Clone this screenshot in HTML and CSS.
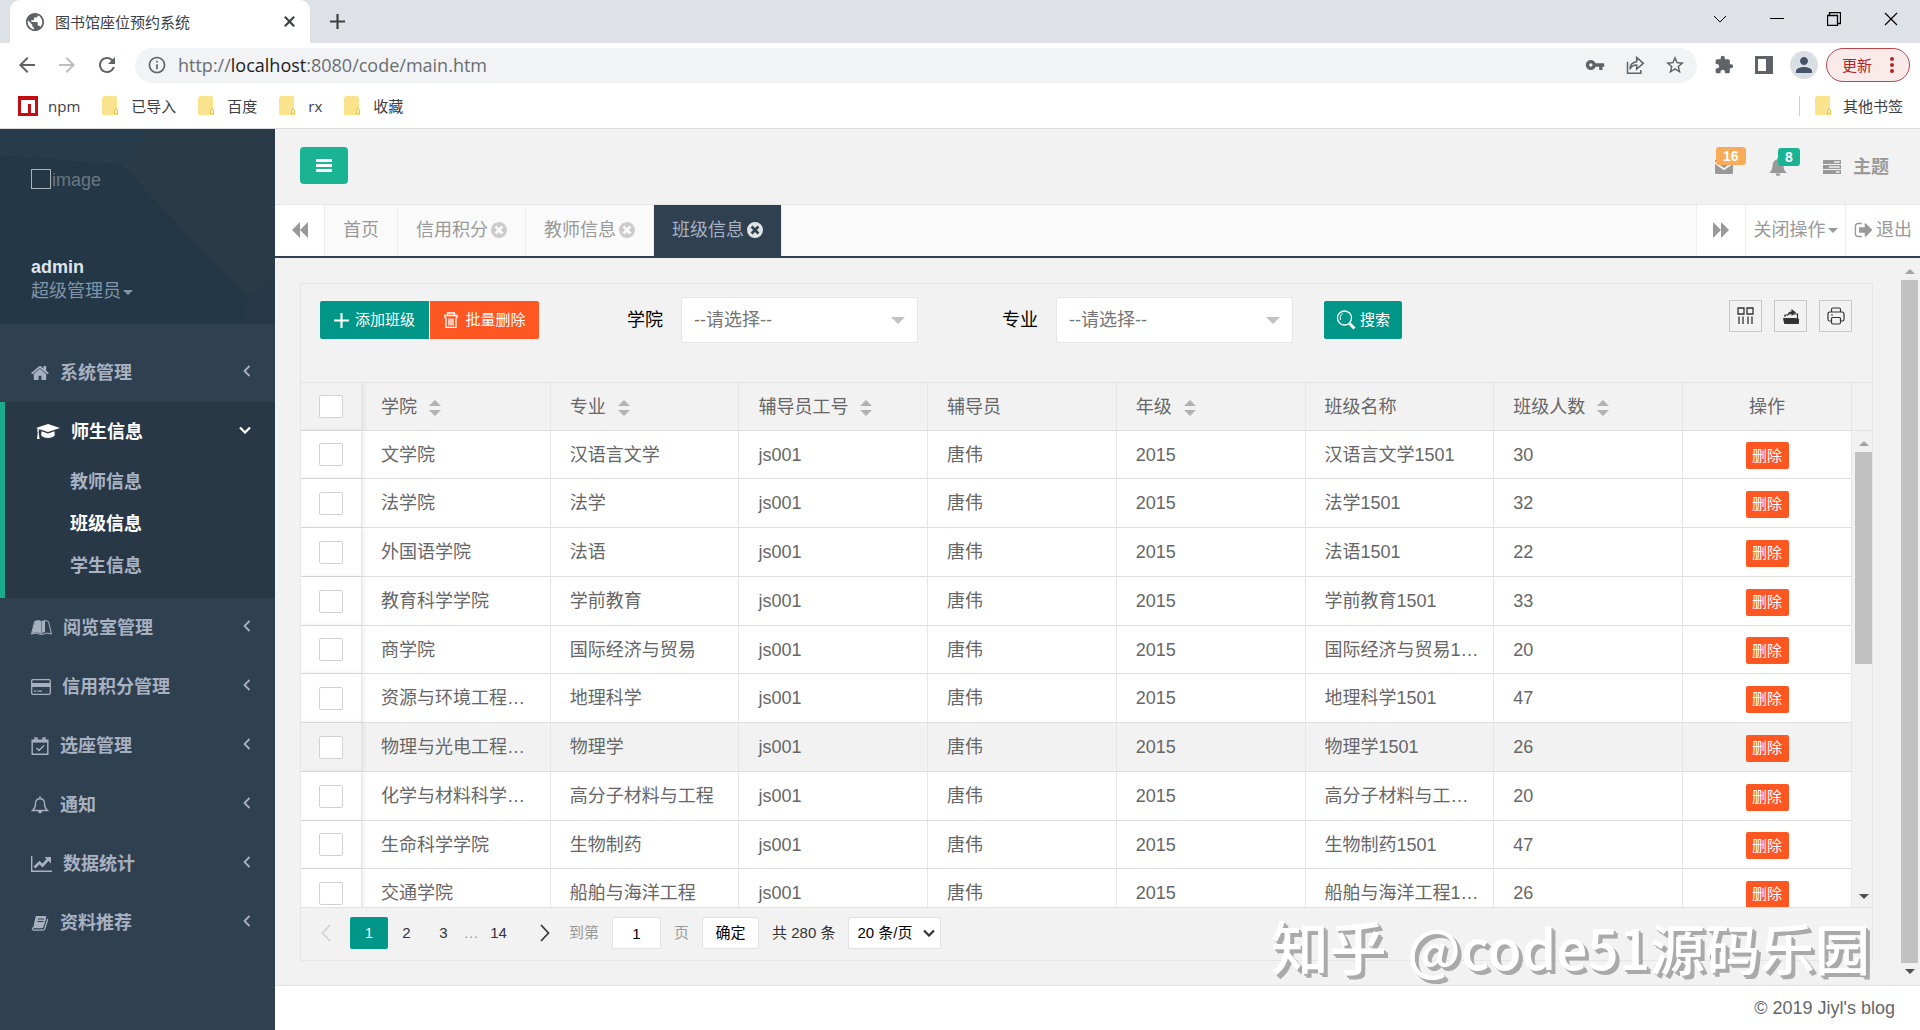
FILE: index.html
```html
<!DOCTYPE html>
<html lang="zh-CN">
<head>
<meta charset="utf-8">
<title>图书馆座位预约系统</title>
<link rel="stylesheet" href="styles.css">
</head>
<body>
<svg class="sprite" aria-hidden="true">
  <symbol id="globe" viewBox="1 1 22 22"><path d="M12 2C6.480 2 2 6.480 2 12s4.480 10 10 10 10-4.480 10-10S17.520 2 12 2zm-1 17.930c-3.950-.49-7-3.850-7-7.930 0-.62.08-1.210.21-1.790L9 15v1c0 1.100.9 2 2 2v1.930zm6.900-2.540c-.26-.81-1-1.390-1.900-1.390h-1v-3c0-.55-.45-1-1-1H8v-2h2c.55 0 1-.45 1-1V7h2c1.100 0 2-.9 2-2v-.41c2.930 1.190 5 4.060 5 7.410 0 2.080-.8 3.970-2.100 5.390z"/></symbol>
  <symbol id="back" viewBox="0 0 24 24"><path d="M20 11H7.830l5.590-5.590L12 4l-8 8 8 8 1.410-1.410L7.830 13H20v-2z"/></symbol>
  <symbol id="reload" viewBox="0 0 24 24"><path d="M17.650 6.350A7.958 7.958 0 0 0 12 4c-4.420 0-7.990 3.580-7.990 8s3.570 8 7.990 8c3.730 0 6.840-2.550 7.730-6h-2.080A5.990 5.990 0 0 1 12 18c-3.310 0-6-2.690-6-6s2.690-6 6-6c1.660 0 3.140.69 4.220 1.780L13 11h7V4l-2.350 2.350z"/></symbol>
  <symbol id="info" viewBox="0 0 24 24"><path d="M11 7h2v2h-2zm0 4h2v6h-2zm1-9C6.480 2 2 6.480 2 12s4.480 10 10 10 10-4.480 10-10S17.520 2 12 2zm0 18c-4.410 0-8-3.590-8-8s3.590-8 8-8 8 3.590 8 8-3.590 8-8 8z"/></symbol>
  <symbol id="key" viewBox="0 0 24 24"><path d="M12.650 10C11.830 7.670 9.610 6 7 6c-3.310 0-6 2.690-6 6s2.690 6 6 6c2.610 0 4.830-1.670 5.650-4H17v4h4v-4h2v-4H12.650zM7 14c-1.100 0-2-.9-2-2s.9-2 2-2 2 .9 2 2-.9 2-2 2z"/></symbol>
  <symbol id="share" viewBox="0 0 24 24"><path d="M3 8v14h16v-4M14 8V3l8 7-8 7v-5q-6 0-8 5 0-8 8-9z" fill="none" stroke="currentColor" stroke-width="1.8"/></symbol>
  <symbol id="star" viewBox="1 1 22 22"><path d="M22 9.240l-7.190-.62L12 2 9.190 8.630 2 9.240l5.460 4.730L5.820 21 12 17.270 18.180 21l-1.630-7.030L22 9.240zM12 15.400l-3.760 2.270 1-4.280-3.320-2.880 4.380-.38L12 6.100l1.710 4.040 4.380.38-3.320 2.880 1 4.280L12 15.400z"/></symbol>
  <symbol id="puzzle" viewBox="0 0 24 24"><path d="M20.500 11H19V7c0-1.100-.9-2-2-2h-4V3.500a2.500 2.500 0 0 0-5 0V5H4c-1.100 0-1.990.9-1.990 2v3.800H3.500c1.490 0 2.700 1.210 2.700 2.700s-1.210 2.700-2.700 2.700H2V20c0 1.100.9 2 2 2h3.800v-1.500c0-1.490 1.210-2.700 2.700-2.700 1.490 0 2.700 1.210 2.700 2.700V22H17c1.100 0 2-.9 2-2v-4h1.500a2.500 2.500 0 0 0 0-5z"/></symbol>
  <symbol id="panel" viewBox="0 0 18 18"><path d="M0 0h18v18H0zM3 3v12h8V3z" fill-rule="evenodd"/></symbol>
  <symbol id="person" viewBox="0 0 24 24"><path d="M12 12c2.210 0 4-1.790 4-4s-1.790-4-4-4-4 1.790-4 4 1.790 4 4 4zm0 2c-2.670 0-8 1.340-8 4v2h16v-2c0-2.660-5.330-4-8-4z"/></symbol>
  <symbol id="folder" viewBox="0 0 16 19"><path d="M1 1q0-1 1-1h11q2 0 2 2v11l1 1v4q0 1-1 1H1q-1 0-1-1V2z" fill="#fbe38e"/><path d="M12.500 18v-3.500l1.500-2 1.500 2V18z" fill="#f7edbb" stroke="#e6c34d"/></symbol>
  <symbol id="npm" viewBox="0 0 20 20"><path d="M0 0h20v20H0z" fill="#c40d12"/><path d="M3 4h14v13h-4V8h-3v9H3z" fill="#fff"/></symbol>
  <symbol id="chev" viewBox="0 0 14 14"><path d="M1 4l6 6 6-6" fill="none" stroke="currentColor"/></symbol>
  <symbol id="min" viewBox="0 0 14 14"><path d="M0 6.500h14" fill="none" stroke="currentColor"/></symbol>
  <symbol id="restore" viewBox="0 0 14 14"><path d="M.5 3.500h10v10H.5zM2.500 3V.5h11v11H11" fill="none" stroke="currentColor" stroke-width="1.300"/></symbol>
  <symbol id="close" viewBox="0 0 14 14"><path d="M1 1l12 12M13 1L1 13" fill="none" stroke="currentColor" stroke-width="1.200"/></symbol>
  <symbol id="cross" viewBox="0 0 14 14"><path d="M2 2l10 10M12 2L2 12" fill="none" stroke="currentColor" stroke-width="2.300"/></symbol>
  <symbol id="plus" viewBox="0 0 14 14"><path d="M7 0v14M0 7h14" fill="none" stroke="currentColor" stroke-width="2"/></symbol>
  <symbol id="bars" viewBox="0 0 16 14"><path d="M0 0h16v3H0zM0 5h16v3H0zM0 10h16v3H0z"/></symbol>
  <symbol id="home" viewBox="64 64 1664 1664"><path d="M1472 992v480q0 26-19 45t-45 19h-384v-384h-256v384h-384q-26 0-45-19t-19-45v-480q0-1 .5-3t.5-3l575-474 575 474q1 2 1 6zm223-69l-62 74q-8 9-21 11h-3q-13 0-21-7l-692-577-692 577q-12 8-24 7-13-2-21-11l-62-74q-8-10-7-23.500t11-21.500l719-599q32-26 76-26t76 26l244 204v-195q0-14 9-23t23-9h192q14 0 23 9t9 23v408l219 182q10 8 11 21.500t-7 23.500z"/></symbol>
  <symbol id="cap" viewBox="0 0 24 16"><path d="M12 0l12 4-12 4L3.500 5.200Q2.600 6 2.600 8l1 7H1l.8-7-.6-1q0-1.500.8-2.200L0 4z"/><path d="M5.500 7.300L12 9.500l6.500-2.200.3 4q-2 2.700-6.800 2.700t-6.800-2.700z"/></symbol>
  <symbol id="books" viewBox="0 0 21 15"><path d="M3.500 1.500q4-2 7 0 3-2 7 0l3 12.500q-5-2-8.500.3h-3Q5 12 .5 14z" fill="none" stroke="currentColor"/><path d="M4 1.500q4-1.500 6.500.3V14Q6 11.500 1 13.500zM11 1.800q1.500-1 3-1V12q-2 .3-3 1.500z"/></symbol>
  <symbol id="card" viewBox="0 0 20 16"><path d="M.7 2q0-1.300 1.300-1.300h16q1.300 0 1.300 1.300v12q0 1.300-1.300 1.300H2Q.7 15.300.7 14z" fill="none" stroke="currentColor" stroke-width="1.300"/><path d="M1 4h18v4H1zM3 11.500h2.500v1.300H3zM6.500 11.500H11v1.300H6.500z"/></symbol>
  <symbol id="cal" viewBox="0 0 17 18"><path d="M.7 3.300h15.600v14H.7zM3.500 1h2v3.500h-2zM11.500 1h2v3.500h-2zM5 11l2.500 2.500 5-5" fill="none" stroke="currentColor" stroke-width="1.400"/><path d="M1 3h15v2.500H1z"/></symbol>
  <symbol id="bello" viewBox="0 0 17 18"><path d="M1 14.500q3-2.500 3-7Q4 3 8.500 2.500 13 3 13 7.500q0 4.500 3 7zM8.500 0v2.500" fill="none" stroke="currentColor" stroke-width="1.300"/><path d="M6.500 15h4q-.3 2.500-2 2.500t-2-2.500z"/></symbol>
  <symbol id="chart" viewBox="0 0 21 16"><path d="M.7 0v15.300H21" fill="none" stroke="currentColor" stroke-width="1.400"/><path d="M3.500 11.500l5-5 3 3 5.500-6" fill="none" stroke="currentColor" stroke-width="2.600"/><path d="M13.500 1H20v6.500z"/></symbol>
  <symbol id="book" viewBox="0 0 17 16"><path d="M5 1h8.500q1.700 0 1.200 1.700L12 12q-.4 1.300-2 1.300H1.500L4 2.200Q4.300 1 5 1z"/><path d="M6.500 4h6M6 6.500h6" stroke="#2f4050"/><path d="M1 12.500q-.3 2.700 1.500 2.700h8.700q1.600 0 2.200-1.700L16.200 4" fill="none" stroke="currentColor" stroke-width="1.300"/></symbol>
  <symbol id="left" viewBox="0 0 8 12"><path d="M6.500 1l-5 5 5 5" fill="none" stroke="currentColor" stroke-width="1.800"/></symbol>
  <symbol id="pageleft" viewBox="0 0 10 18"><path d="M9 1L1.500 9 9 17" fill="none" stroke="currentColor" stroke-width="1.700"/></symbol>
  <symbol id="down" viewBox="0 0 12 8"><path d="M1 1.500l5 5 5-5" fill="none" stroke="currentColor" stroke-width="2.200"/></symbol>
  <symbol id="rw" viewBox="0 0 16 16"><path d="M8 0v16L0 8zM16 0v16L8 8z"/></symbol>
  <symbol id="tabx" viewBox="0 0 16 16"><path fill-rule="evenodd" d="M8 0a8 8 0 1 0 0 16A8 8 0 0 0 8 0zM5.500 3.600L8 6.100l2.500-2.500 1.900 1.900L9.900 8l2.500 2.500-1.900 1.900L8 9.900l-2.500 2.500-1.900-1.900L6.100 8 3.600 5.500z"/></symbol>
  <symbol id="signout" viewBox="0 0 1792 1792"><path d="M704 1440q0 4 1 20t.5 26.500-3 23.500-10 19.500-20.500 6.500h-320q-119 0-203.500-84.500t-84.500-203.500v-704q0-119 84.500-203.500t203.500-84.500h320q13 0 22.500 9.500t9.500 22.500q0 4 1 20t.5 26.500-3 23.500-10 19.500-20.500 6.500h-320q-66 0-113 47t-47 113v704q0 66 47 113t113 47h312l11.500 1 11.500 3 8 5.500 7 9 2 13.500zm928-544q0 26-19 45l-544 544q-19 19-45 19t-45-19-19-45v-288h-448q-26 0-45-19t-19-45v-384q0-26 19-45t45-19h448v-288q0-26 19-45t45-19 45 19l544 544q19 19 19 45z"/></symbol>
  <symbol id="mail" viewBox="0 0 18 14"><path d="M0 0h18v1.500L9 8 0 1.500z"/><path d="M0 4l9 6.300L18 4v8.500q0 1.500-1.500 1.500h-15Q0 14 0 12.500z"/></symbol>
  <symbol id="bell" viewBox="0 0 18 18"><path d="M9 0q1.300 0 1.300 1.800Q14.500 3 14.500 8q0 4.500 3.500 7H0q3.500-2.500 3.500-7 0-5 4.200-6.200Q7.700 0 9 0zM6.500 15.500h5Q11 18 9 18t-2.500-2.500z"/></symbol>
  <symbol id="tasks" viewBox="0 0 18 14"><path fill-rule="evenodd" d="M0 0h18v4H0zm11 1.300v1.400h5.700V1.300zM0 5h18v4H0zm6 1.300v1.400h10.700V6.300zM0 10h18v4H0zm13 1.300v1.400h3.700v-1.400z"/></symbol>
  <symbol id="trash" viewBox="0 0 16 16"><path d="M1 3.500h14M4.500 3V1h7v2M2 3.500V6M14 3.500V6M3 5.500v9.800h10V5.500M6 6.500v7M8 6.500v7M10 6.500v7" fill="none" stroke="currentColor" stroke-width="1.300"/></symbol>
  <symbol id="search" viewBox="0 0 20 20"><circle cx="8.500" cy="8" r="7" fill="none" stroke="currentColor" stroke-width="1.300"/><path d="M4.500 10Q3 6 6.500 3.500" fill="none" stroke="currentColor"/><path d="M13.500 13.500l5 5" fill="none" stroke="currentColor" stroke-width="3"/></symbol>
  <symbol id="cols" viewBox="0 0 17 18"><path d="M1 1h6v6H1zM10 1h6v6h-6zM2 9.500V17M6 9.500V17M11 9.500V17M15 9.500V17" fill="none" stroke="currentColor" stroke-width="1.300"/></symbol>
  <symbol id="export" viewBox="0 0 16 17"><path d="M0 10h13l3 1v4q0 1-1 1H2q-1 0-1-1z"/><path d="M2 9V7h3M10 6h4.500v9" fill="none" stroke="currentColor" stroke-width="1.200"/><path d="M4.500 8q0-4.500 4-4.500V1L13 4.500 8.500 8V6Q6 6 4.500 8z"/></symbol>
  <symbol id="print" viewBox="0 0 18 18"><path d="M4.500 5V2.500Q4.500 1 6 1h6q1.500 0 1.500 1.500V5M4 14H2.500Q1 14 1 12V7q0-2 2-2h12q2 0 2 2v5q0 2-1.500 2H14M5.500 10.500h7q1 0 1 1v4q0 1.500-1.500 1.500H6q-1.500 0-1.500-1.500v-4q0-1 1-1zM4 8h2" fill="none" stroke="currentColor" stroke-width="1.200"/></symbol>
</svg>

<header class="browser">
  <div class="tabstrip">
    <div class="browser-tab">
      <svg class="i20 grey"><use href="#globe"/></svg>
      <span class="tab-title">图书馆座位预约系统</span>
      <svg class="i13"><use href="#cross"/></svg>
    </div>
    <svg class="i15 newtab"><use href="#plus"/></svg>
    <div class="window-controls">
      <svg class="i14"><use href="#chev"/></svg>
      <svg class="i14"><use href="#min"/></svg>
      <svg class="i14"><use href="#restore"/></svg>
      <svg class="i14"><use href="#close"/></svg>
    </div>
  </div>
  <div class="addressbar">
    <svg class="i24 grey"><use href="#back"/></svg>
    <svg class="i24 forward"><use href="#back"/></svg>
    <svg class="i24 grey"><use href="#reload"/></svg>
    <div class="omnibox">
      <svg class="i20 grey"><use href="#info"/></svg>
      <span class="url">http://<b>localhost</b>:8080/code/main.htm</span>
      <svg class="i20 grey"><use href="#key"/></svg>
      <svg class="i20 grey"><use href="#share"/></svg>
      <svg class="i20 grey"><use href="#star"/></svg>
    </div>
    <svg class="i20 grey"><use href="#puzzle"/></svg>
    <svg class="i18 grey"><use href="#panel"/></svg>
    <span class="avatar"><svg class="i24"><use href="#person"/></svg></span>
    <button class="update" type="button">更新<span class="dots"></span></button>
  </div>
  <nav class="bookmarks">
    <a href="#"><svg class="i20"><use href="#npm"/></svg><span class="npm">npm</span></a>
    <a href="#"><svg class="folder"><use href="#folder"/></svg>已导入</a>
    <a href="#"><svg class="folder"><use href="#folder"/></svg>百度</a>
    <a href="#"><svg class="folder"><use href="#folder"/></svg>rx</a>
    <a href="#"><svg class="folder"><use href="#folder"/></svg>收藏</a>
    <a href="#" class="others"><svg class="folder"><use href="#folder"/></svg>其他书签</a>
  </nav>
</header>

<div class="app">
  <aside class="sidebar">
    <div class="profile">
      <svg class="facets" viewBox="0 0 275 195" preserveAspectRatio="none" aria-hidden="true">
        <path d="M0 0h148l-26 36L0 26z" fill="#283b4a"/><path d="M148 0h127v150l-28 18L122 36z" fill="#293b49"/><path d="M247 168l28-18v45h-32z" fill="#273848"/>
      </svg>
      <div class="photo"><span class="photo-box"></span>image</div>
      <strong>admin</strong>
      <a href="#">超级管理员<span class="caret"></span></a>
    </div>
    <ul class="menu">
      <li><a href="#"><svg width="18" height="18"><use href="#home"/></svg>系统管理<svg class="arrow"><use href="#left"/></svg></a></li>
      <li class="active">
        <a href="#"><svg width="24" height="16"><use href="#cap"/></svg>师生信息<svg class="arrow-down"><use href="#down"/></svg></a>
        <ul class="submenu">
          <li><a href="#">教师信息</a></li>
          <li><a href="#" class="current">班级信息</a></li>
          <li><a href="#">学生信息</a></li>
        </ul>
      </li>
      <li><a href="#"><svg width="21" height="15"><use href="#books"/></svg>阅览室管理<svg class="arrow"><use href="#left"/></svg></a></li>
      <li><a href="#"><svg width="20" height="16"><use href="#card"/></svg>信用积分管理<svg class="arrow"><use href="#left"/></svg></a></li>
      <li><a href="#"><svg width="18" height="18"><use href="#cal"/></svg>选座管理<svg class="arrow"><use href="#left"/></svg></a></li>
      <li><a href="#"><svg width="18" height="18"><use href="#bello"/></svg>通知<svg class="arrow"><use href="#left"/></svg></a></li>
      <li><a href="#"><svg width="21" height="16"><use href="#chart"/></svg>数据统计<svg class="arrow"><use href="#left"/></svg></a></li>
      <li><a href="#"><svg width="18" height="16"><use href="#book"/></svg>资料推荐<svg class="arrow"><use href="#left"/></svg></a></li>
    </ul>
  </aside>

  <main class="main">
    <div class="topbar">
      <button class="toggle" type="button" aria-label="菜单"><svg width="16" height="14"><use href="#bars"/></svg></button>
      <div class="notices">
        <a href="#" aria-label="消息"><svg width="18" height="14"><use href="#mail"/></svg><span class="badge orange">16</span></a>
        <a href="#" aria-label="提醒"><svg width="18" height="18"><use href="#bell"/></svg><span class="badge green">8</span></a>
        <a href="#" class="theme"><svg width="18" height="14"><use href="#tasks"/></svg>主题</a>
      </div>
    </div>
    <nav class="tabs">
      <button class="roll" type="button" aria-label="向左"><svg class="i16"><use href="#rw"/></svg></button>
      <a href="#">首页</a>
      <a href="#">信用积分<svg class="i16"><use href="#tabx"/></svg></a>
      <a href="#">教师信息<svg class="i16"><use href="#tabx"/></svg></a>
      <a href="#" class="selected">班级信息<svg class="i16"><use href="#tabx"/></svg></a>
      <button class="roll right" type="button" aria-label="向右"><svg class="i16 flip"><use href="#rw"/></svg></button>
      <button class="closeops" type="button">关闭操作<span class="caret"></span></button>
      <button class="exit" type="button"><svg class="i20"><use href="#signout"/></svg>退出</button>
    </nav>

    <div class="frame">
      <section class="panel">
        <form class="toolbar">
          <div class="btn-group">
            <button class="btn teal" type="button"><svg class="i15"><use href="#plus"/></svg>添加班级</button>
            <button class="btn red" type="button"><svg class="i16"><use href="#trash"/></svg>批量删除</button>
          </div>
          <div class="field"><label for="college">学院</label><span class="pick"><select id="college"><option>--请选择--</option></select></span></div>
          <div class="field"><label for="major">专业</label><span class="pick"><select id="major"><option>--请选择--</option></select></span></div>
          <button class="btn teal search" type="button"><svg class="i20"><use href="#search"/></svg>搜索</button>
          <div class="tools">
            <button type="button" aria-label="筛选列"><svg width="17" height="18"><use href="#cols"/></svg></button>
            <button type="button" aria-label="导出"><svg width="16" height="17"><use href="#export"/></svg></button>
            <button type="button" aria-label="打印"><svg width="18" height="18"><use href="#print"/></svg></button>
          </div>
        </form>
        <div class="grid">
          <div class="table-view">
            <table>
              <colgroup><col class="c-check"><col><col><col><col><col><col><col><col class="c-act"></colgroup>
              <thead><tr><th><input type="checkbox" aria-label="全选"></th><th>学院<i class="sort"></i></th><th>专业<i class="sort"></i></th><th>辅导员工号<i class="sort"></i></th><th>辅导员</th><th>年级<i class="sort"></i></th><th>班级名称</th><th>班级人数<i class="sort"></i></th><th>操作</th></tr></thead>
              <tbody>
                <tr><td><input type="checkbox" aria-label="选择"></td><td>文学院</td><td>汉语言文学</td><td>js001</td><td>唐伟</td><td>2015</td><td>汉语言文学1501</td><td>30</td><td><button type="button">删除</button></td></tr>
                <tr><td><input type="checkbox" aria-label="选择"></td><td>法学院</td><td>法学</td><td>js001</td><td>唐伟</td><td>2015</td><td>法学1501</td><td>32</td><td><button type="button">删除</button></td></tr>
                <tr><td><input type="checkbox" aria-label="选择"></td><td>外国语学院</td><td>法语</td><td>js001</td><td>唐伟</td><td>2015</td><td>法语1501</td><td>22</td><td><button type="button">删除</button></td></tr>
                <tr><td><input type="checkbox" aria-label="选择"></td><td>教育科学学院</td><td>学前教育</td><td>js001</td><td>唐伟</td><td>2015</td><td>学前教育1501</td><td>33</td><td><button type="button">删除</button></td></tr>
                <tr><td><input type="checkbox" aria-label="选择"></td><td>商学院</td><td>国际经济与贸易</td><td>js001</td><td>唐伟</td><td>2015</td><td>国际经济与贸易1501</td><td>20</td><td><button type="button">删除</button></td></tr>
                <tr><td><input type="checkbox" aria-label="选择"></td><td>资源与环境工程学院</td><td>地理科学</td><td>js001</td><td>唐伟</td><td>2015</td><td>地理科学1501</td><td>47</td><td><button type="button">删除</button></td></tr>
                <tr class="hover"><td><input type="checkbox" aria-label="选择"></td><td>物理与光电工程学院</td><td>物理学</td><td>js001</td><td>唐伟</td><td>2015</td><td>物理学1501</td><td>26</td><td><button type="button">删除</button></td></tr>
                <tr><td><input type="checkbox" aria-label="选择"></td><td>化学与材料科学学院</td><td>高分子材料与工程</td><td>js001</td><td>唐伟</td><td>2015</td><td>高分子材料与工程1501</td><td>20</td><td><button type="button">删除</button></td></tr>
                <tr><td><input type="checkbox" aria-label="选择"></td><td>生命科学学院</td><td>生物制药</td><td>js001</td><td>唐伟</td><td>2015</td><td>生物制药1501</td><td>47</td><td><button type="button">删除</button></td></tr>
                <tr><td><input type="checkbox" aria-label="选择"></td><td>交通学院</td><td>船舶与海洋工程</td><td>js001</td><td>唐伟</td><td>2015</td><td>船舶与海洋工程1501</td><td>26</td><td><button type="button">删除</button></td></tr>
              </tbody>
            </table>
          </div>
          <div class="scroll-column"><div class="scroll-head"></div><div class="scrollbar inner"><span class="up"></span><span class="thumb"></span><span class="dn"></span></div></div>
        </div>
        <div class="pager">
          <a href="#" class="prev" aria-label="上一页"><svg width="10" height="18"><use href="#pageleft"/></svg></a>
          <a href="#" class="page on">1</a><a href="#" class="page">2</a><a href="#" class="page">3</a><span class="gap">…</span><a href="#" class="page">14</a>
          <a href="#" class="next" aria-label="下一页"><svg width="10" height="18" class="flip"><use href="#pageleft"/></svg></a>
          <label class="goto">到第<input type="text" value="1">页</label>
          <button type="button">确定</button>
          <span class="total">共 280 条</span>
          <span class="limit"><select aria-label="每页条数"><option>20 条/页</option></select><svg width="12" height="8"><use href="#down"/></svg></span>
        </div>
      </section>
      <div class="scrollbar outer"><span class="up"></span><span class="thumb"></span><span class="dn"></span></div>
      <div class="watermark"><span class="brand">知乎</span> @code51源码乐园</div>
    </div>
    <footer class="footer">© 2019 Jiyl's blog</footer>
  </main>
</div>
</body>
</html>
```

FILE: styles.css
```css
* { box-sizing: border-box; }
body {
  margin: 0;
  min-height: 100vh;
  display: flex;
  flex-direction: column;
  font: 18px/24px "Liberation Sans", "Noto Sans CJK SC", sans-serif;
  color: #666;
  background: #fff;
}
a { color: inherit; text-decoration: none; }
ul { list-style: none; margin: 0; padding: 0; }
svg { fill: currentColor; flex: none; display: block; }
button, input, select { font: inherit; color: inherit; margin: 0; padding: 0; border: 0; }
button { display: flex; align-items: center; justify-content: center; background: none; }
.sprite { position: absolute; width: 0; height: 0; }
.i13 { width: 13px; height: 13px; }
.i14 { width: 14px; height: 14px; }
.i15 { width: 15px; height: 15px; }
.i16 { width: 16px; height: 16px; }
.i18 { width: 18px; height: 18px; }
.i20 { width: 20px; height: 20px; }
.i24 { width: 24px; height: 24px; }
.grey { color: #5f6368; }
.flip { transform: scaleX(-1); }
.caret { display: inline-block; border: 5px solid transparent; border-top-color: currentColor; border-bottom: 0; margin-left: 2px; vertical-align: middle; }

/* Browser frame */
.browser { font-family: "Open Sans", "Noto Sans CJK SC", sans-serif; font-size: 15px; color: #3c4043; border-bottom: 1px solid #d8dadd; }
.tabstrip { display: flex; height: 43px; background: #dee1e6; padding-left: 10px; }
.browser-tab { display: flex; align-items: center; width: 300px; padding: 0 14px 0 15px; background: #fff; border-radius: 10px 10px 0 0; }
.tab-title { margin-left: 10px; flex: 1; }
.newtab { margin: 14px 0 0 20px; }
.window-controls { display: flex; gap: 43px; margin: 12px 22px 0 auto; color: #000; }
.addressbar { display: flex; align-items: center; height: 44px; padding: 0 10px 0 15px; }
.addressbar > .i24 { margin-right: 16px; }
.forward { color: #bcbec1; transform: scaleX(-1); }
.omnibox { flex: 1; display: flex; align-items: center; height: 35px; padding: 0 12px; margin-right: 17px; border-radius: 18px; background: #f1f3f4; gap: 20px; }
.url { flex: 1; font-size: 18px; color: #6a6e73; margin-left: -9px; }
.url b { font-weight: 400; color: #202124; }
.addressbar > .i18 { margin: 0 17px 0 21px; }
.avatar { display: flex; align-items: center; justify-content: center; width: 28px; height: 28px; border-radius: 50%; background: #dadfe6; color: #46546a; margin-right: 8px; }
.update { width: 84px; height: 34px; border: 1px solid #b3484a; border-radius: 17px; background: #fbeaea; color: #b3261e; gap: 18px; }
.dots { width: 4px; height: 4px; border-radius: 50%; background: #b3261e; box-shadow: 0 -6px #b3261e, 0 6px #b3261e; }
.bookmarks { display: flex; align-items: center; height: 41px; padding: 0 17px 4px 18px; gap: 22px; }
.bookmarks a { display: flex; align-items: center; gap: 13px; }
.npm { margin-left: -3px; }
.folder { width: 16px; height: 19px; }
.bookmarks .others { margin-left: auto; border-left: 1px solid #c9ccd0; padding-left: 15px; height: 20px; gap: 12px; }

/* Sidebar */
.app { flex: 1; display: flex; }
.sidebar { flex: none; width: 275px; background: #2f4050; color: #a7b1c2; }
.profile { position: relative; height: 195px; padding: 40px 31px 0; background: #243747; color: #8095a8; overflow: hidden; display: flex; flex-direction: column; }
.facets { position: absolute; left: 0; top: 0; width: 100%; height: 100%; }
.profile > :not(.facets) { position: relative; }
.photo { display: flex; color: #6b7780; height: 86px; line-height: 22px; }
.photo-box { width: 20px; height: 20px; border: 1px solid #a8b2b8; margin-right: 1px; }
.profile strong { color: #dfe4ed; }
.menu { padding-top: 19px; font-weight: 700; }
.menu > li > a { display: flex; align-items: center; height: 59px; padding: 0 24px 0 31px; gap: 11px; }
.arrow { width: 8px; height: 12px; margin: -4px 0 0 auto; }
.arrow-down { width: 12px; height: 8px; margin: -4px 0 0 auto; }
.menu > .active { background: #293846; border-left: 5px solid #19aa8d; padding-bottom: 11px; }
.menu > .active > a, .submenu .current { color: #fff; }
.submenu a { display: flex; align-items: center; height: 42px; padding-left: 65px; }

/* Header and page tabs */
.main { flex: 1; min-width: 0; display: flex; flex-direction: column; background: #f2f2f2; }
.topbar { display: flex; justify-content: space-between; height: 76px; padding: 18px 31px 0 25px; border-bottom: 1px solid #e7e7e7; }
.toggle { width: 48px; height: 37px; border-radius: 4px; background: #1ab394; color: #fff; }
.notices { display: flex; gap: 36px; height: 39px; align-items: center; color: #999; }
.notices a { position: relative; }
.theme { display: flex; align-items: center; gap: 12px; font-weight: 700; }
.badge { position: absolute; left: 1px; bottom: 9px; height: 18px; padding: 0 7px; border-radius: 3px; color: #fff; font: 700 14px/18px "Liberation Sans", sans-serif; }
.badge.green { left: 9px; bottom: 10px; }
.orange { background: #f8ac59; }
.green { background: #1ab394; }
.tabs { display: flex; height: 53px; border-bottom: 2px solid #2f4050; background: #fafafa; color: #999; }
.tabs > a, .tabs > button { padding-bottom: 1px; }
.tabs > a { display: flex; align-items: center; gap: 3px; padding-left: 18px; padding-right: 18px; border-right: 1px solid #eee; }
.tabs > a svg { color: #ccc; }
.tabs > .selected { background: #2f4050; color: #a7b1c2; }
.tabs > .selected svg { color: #dfe4e6; }
.tabs button { background: #fff; border-right: 1px solid #eee; }
.roll { width: 50px; }
.roll.right { margin-left: auto; border-left: 1px solid #eee; }
.closeops { width: 100px; }
.tabs .exit { width: 74px; gap: 2px; border-right: 0; }

/* Content */
.frame { flex: 1; position: relative; display: flex; padding: 11px 2px 11px 25px; border-bottom: 1px solid #e4e4e4; }
.panel { flex: 1; min-width: 0; margin: 14px 28px 13px 0; border: 1px solid #e6e6e6; }
.toolbar { display: flex; align-items: center; height: 98px; padding: 0 20px 26px 19px; }
.btn-group { display: flex; gap: 1px; margin-right: 88px; }
.btn { height: 38px; width: 109px; gap: 6px; color: #fff; font-size: 15px; }
.btn-group .btn:first-child { border-radius: 2px 0 0 2px; }
.btn-group .btn:last-child { border-radius: 0 2px 2px 0; }
.teal { background: #009688; }
.red { background: #ff5722; }
.btn.search { width: 78px; gap: 4px; border-radius: 2px; margin-left: -53px; }
.field { display: flex; align-items: center; color: #000; gap: 18px; margin-right: 84px; }
.pick { position: relative; display: flex; width: 237px; }
.pick::after { content: ""; position: absolute; right: 13px; top: 20px; border: 7px solid transparent; border-top-color: #c2c2c2; border-bottom: 0; }
.pick select { appearance: none; width: 100%; height: 46px; padding: 0 12px; border: 1px solid #e6e6e6; border-radius: 2px; background: #fff; color: #757575; }
.tools { display: flex; gap: 12px; margin: -8px 0 0 auto; }
.tools button { width: 33px; height: 32px; border: 1px solid #c8c8c8; color: #333; }
.grid { display: flex; border-top: 1px solid #e2e2e2; border-bottom: 1px solid #e2e2e2; }
.table-view { flex: 1; min-width: 0; height: 524px; overflow: hidden; }
table { width: 100%; table-layout: fixed; border-collapse: separate; border-spacing: 0; }
.c-check { width: 61px; }
.c-act { width: 169px; }
tbody tr { background: #fff; }
tbody .hover { background: #f2f2f2; }
th, td { height: 49px; padding: 0 13px 0 19px; border-right: 1px solid #e6e6e6; border-bottom: 1px solid #dedede; font-weight: 400; text-align: left; vertical-align: middle; white-space: nowrap; overflow: hidden; text-overflow: ellipsis; }
th, tr:nth-child(4n+1) td { height: 48px; }
tr > :first-child { padding: 0 0 0 18px; box-shadow: 1px 0 5px rgba(0, 0, 0, .1); }
tr > :last-child { padding: 0; text-align: center; }
td button { margin: 2px auto 0; width: 43px; height: 27px; border-radius: 2px; background: #ff5722; color: #fff; font-size: 15px; }
input[type="checkbox"] { appearance: none; display: block; width: 24px; height: 23px; border: 1px solid #d2d2d2; border-radius: 2px; background: #fff; }
.sort { display: inline-block; position: relative; width: 12px; height: 16px; margin-left: 12px; vertical-align: -3px; }
.sort::before, .sort::after { content: ""; position: absolute; left: 0; border: 6px solid transparent; }
.sort::before { top: 0; border-top: 0; border-bottom-color: #b2b2b2; }
.sort::after { bottom: 0; border-bottom: 0; border-top-color: #b2b2b2; }
.scroll-column { width: 20px; display: flex; flex-direction: column; }
.scroll-head { height: 48px; border-bottom: 1px solid #e2e2e2; }
.scrollbar { display: flex; flex-direction: column; align-items: center; width: 17px; background: #f1f1f1; }
.scrollbar.inner { flex: 1; margin-left: 3px; padding: 10px 0 8px; }
.inner .thumb { height: 212px; margin-bottom: auto; }
.scrollbar .thumb { width: 100%; background: #c1c1c1; }
.outer .thumb { flex: 1; }
.up, .dn { border: 5px solid transparent; }
.up { border-top: 0; border-bottom-color: #a3a3a3; margin-bottom: 6px; }
.dn { border-bottom: 0; border-top-color: #505050; margin-top: 6px; }

/* Pagination */
.pager { display: flex; align-items: center; height: 52px; padding: 0 0 2px 20px; font-size: 15px; color: #333; }
.prev { width: 29px; color: #d2d2d2; }
.page { width: 37px; height: 32px; line-height: 32px; text-align: center; }
.page.on { width: 38px; border-radius: 2px; background: #009688; color: #fff; }
.gap { width: 18px; text-align: center; color: #999; }
.next { margin: 0 19px 0 23px; }
.goto { display: flex; align-items: center; gap: 13px; color: #999; margin-right: 13px; }
.goto input { width: 49px; height: 32px; text-align: center; color: #000; background: #fff; border: 1px solid #e2e2e2; border-radius: 2px; }
.pager button { width: 57px; height: 32px; border: 1px solid #e2e2e2; border-radius: 2px; background: #fff; color: #000; }
.total { margin: 0 13px; }
.limit { position: relative; }
.limit select { appearance: none; width: 93px; height: 32px; padding-left: 8px; border: 1px solid #e2e2e2; border-radius: 2px; background: #fff; color: #000; }
.limit svg { position: absolute; right: 6px; top: 12px; }

.footer { height: 44px; padding: 0 25px; line-height: 45px; text-align: right; background: #fff; }
.watermark { position: absolute; right: 50px; bottom: 0; font: 500 55px/78px "Noto Sans CJK SC", sans-serif; color: #fff; text-shadow: 2px 2px #aaa, 4px 4px #aaa; white-space: nowrap; }
.brand { font-size: 58px; margin-right: 8px; }
```
